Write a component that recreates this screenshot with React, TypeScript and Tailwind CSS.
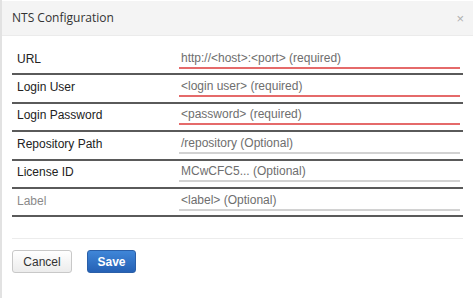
import React from "react";

const rows = [
  { label: "URL", ph: "http://<host>:<port> (required)", req: true, muted: false },
  { label: "Login User", ph: "<login user> (required)", req: true, muted: false },
  { label: "Login Password", ph: "<password> (required)", req: true, muted: false },
  { label: "Repository Path", ph: "/repository (Optional)", req: false, muted: false },
  { label: "License ID", ph: "MCwCFC5... (Optional)", req: false, muted: false },
  { label: "Label", ph: "<label> (Optional)", req: false, muted: true },
];

export default function App() {
  return (
    <div className="w-[474px] h-[298px] bg-white flex overflow-hidden" style={{ fontFamily: '"Liberation Sans", Arial, sans-serif' }}>
      <div className="w-[2px] bg-[#e2e2e2] shrink-0" />
      <div className="flex-1 flex flex-col">
        <div className="h-[35px] bg-[#f4f4f4] border-b border-[#ebebeb] flex items-center justify-between pl-[10px] pr-[9px] mt-[1px] mr-[1px]">
          <span className="text-[12px] text-[#333]" style={{ fontFamily: '"Open Sans", "Noto Sans", sans-serif' }}>NTS Configuration</span>
          <span className="text-[13px] text-[#b0b0b0] leading-none">×</span>
        </div>
        <div className="pl-[10px] pt-[11px]">
          <div className="w-[451px] flex flex-col">
            {rows.map((r) => (
              <div key={r.label} className="h-[28.4px] border-b-2 border-[#5a5a5a] flex items-center">
                <div className={`w-[167px] pl-[5px] text-[12px] ${r.muted ? "text-[#8a8a8a]" : "text-[#222]"} pb-[3px]`}>{r.label}</div>
                <div className={`w-[281px] h-[20px] mb-[3px] border-b-2 ${r.req ? "border-[#e56a6a]" : "border-[#d2d2d2]"} flex items-center pl-[2px] text-[12px] text-[#6e6e6e]`}>
                  {r.ph}
                </div>
              </div>
            ))}
          </div>
          <div className="w-[451px] border-b border-[#ececec] mt-[21px]" />
          <div className="flex gap-[15px] mt-[11px]">
            <button className="w-[60px] h-[23px] rounded-[3px] border border-[#c8c8c8] bg-gradient-to-b from-white to-[#ececec] text-[12px] text-[#333]">Cancel</button>
            <button className="w-[49px] h-[23px] rounded-[3px] border border-[#2a5fa8] bg-gradient-to-b from-[#3f86d8] to-[#2561b5] text-[12px] font-bold text-white">Save</button>
          </div>
        </div>
      </div>
    </div>
  );
}
